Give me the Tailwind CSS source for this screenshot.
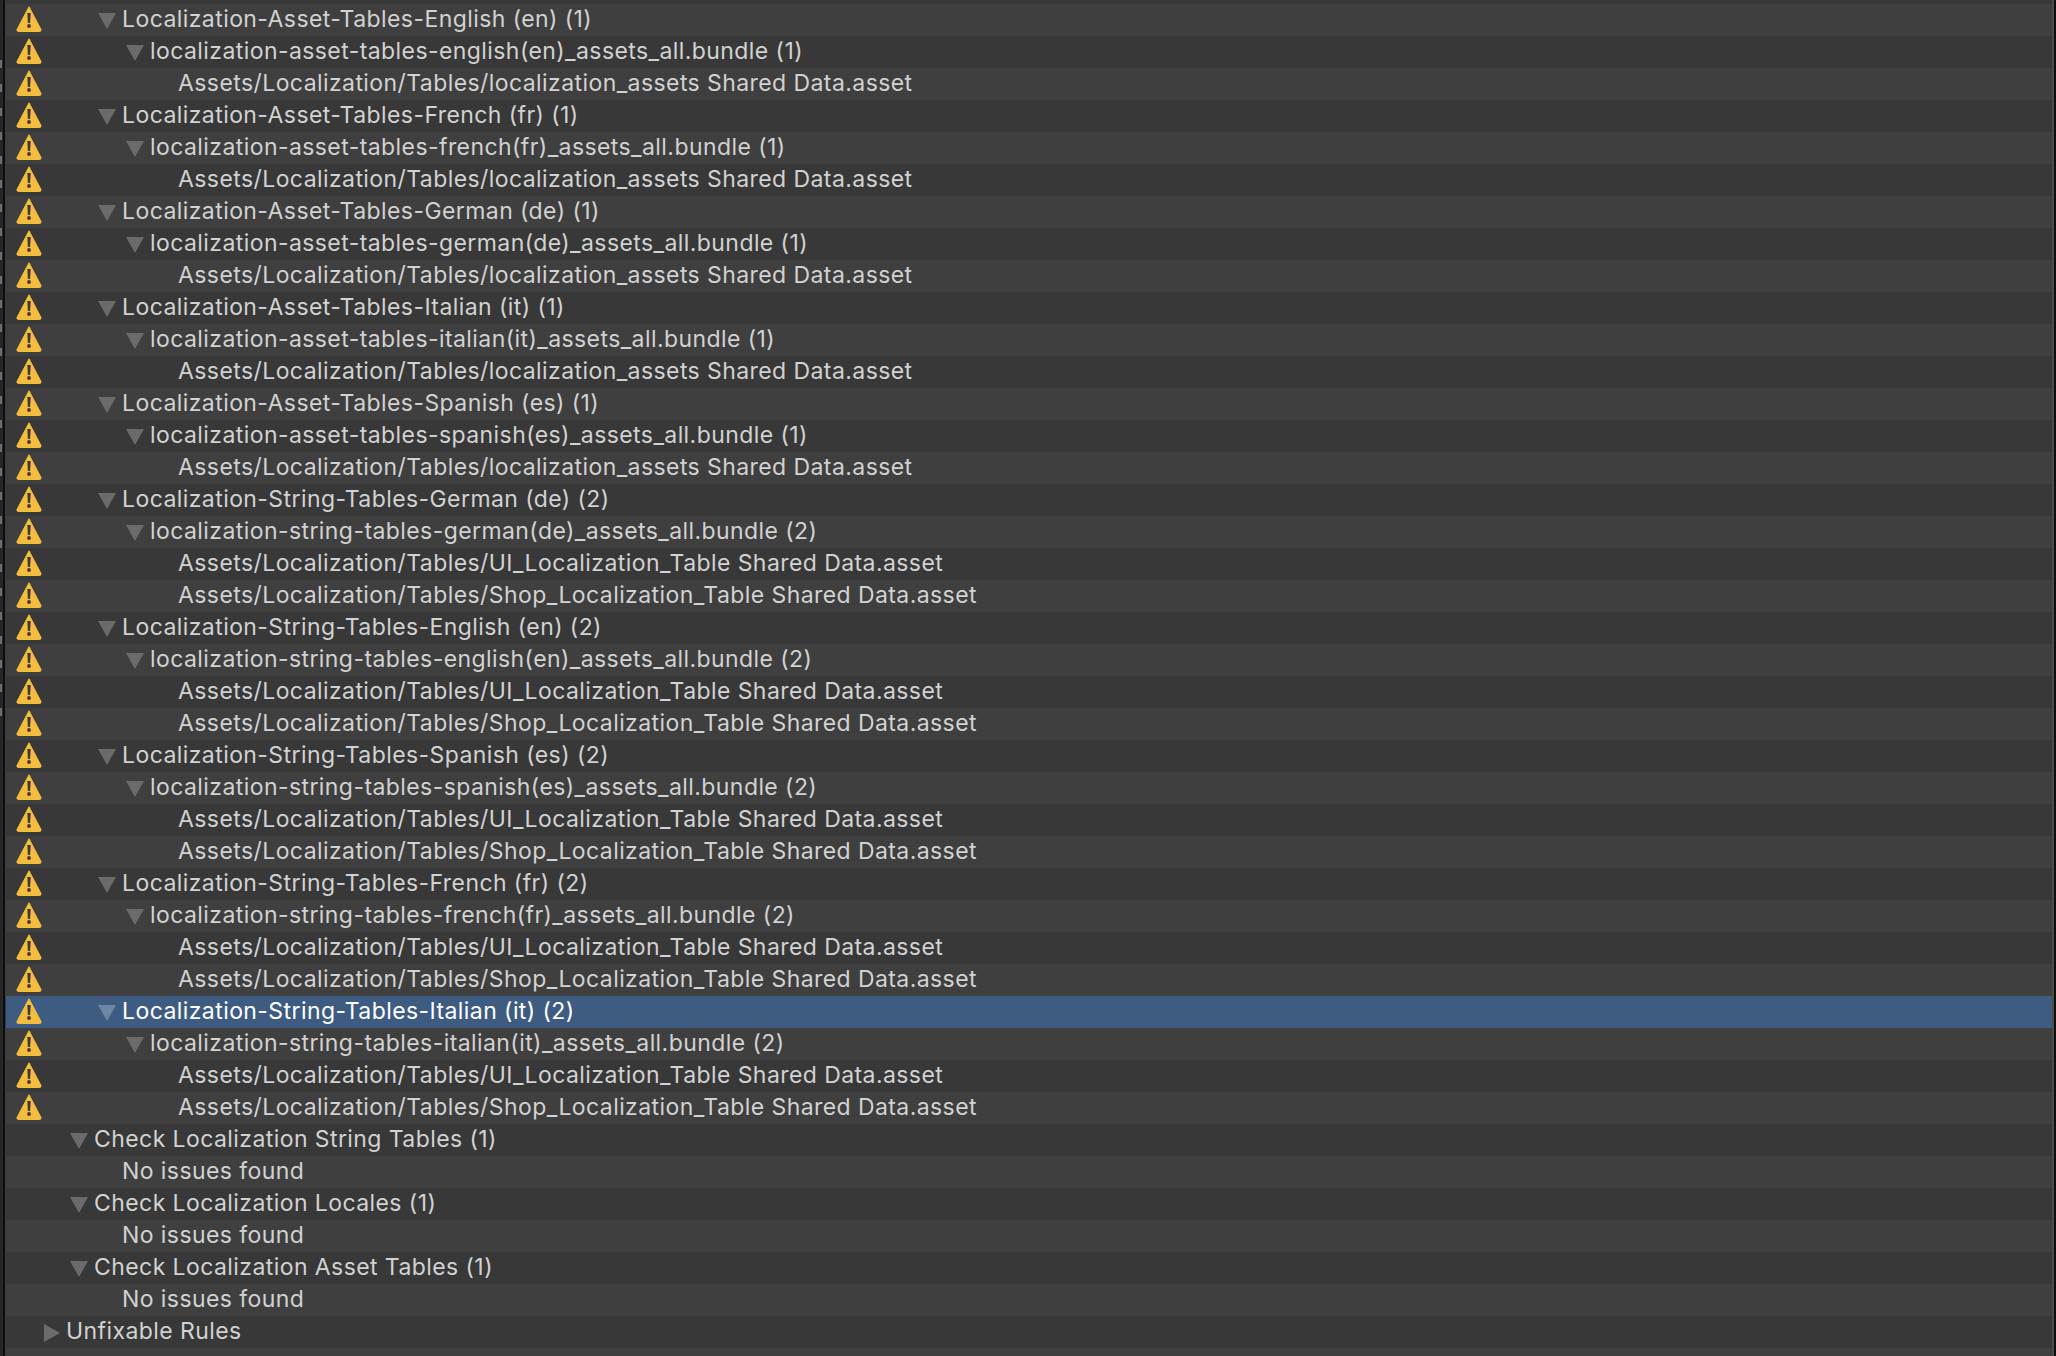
<!DOCTYPE html>
<html lang="en">
<head>
<meta charset="UTF-8">
<title>Analyze Rules</title>
<script src="https://cdn.jsdelivr.net/npm/@tailwindcss/browser@4"></script>
</head>
<body class="bg-[#232323] h-[1356px] w-[2056px] overflow-hidden font-['Inter',sans-serif]">
<div class="flex h-[1356px]">
  <!-- clipped neighbour panel, only slivers of its text show -->
  <div id="gutter" class="w-[3px] shrink-0 overflow-hidden bg-[#262626] pt-[60px] flex flex-col gap-[16px]"></div>
  <div class="w-[2px] shrink-0 bg-[#0e0e0e]"></div>
  <div class="w-px shrink-0 bg-[#3a3a3a]"></div>
  <div class="flex-1 flex flex-col overflow-hidden">
    <div class="h-1 shrink-0 bg-[#383838]"></div>
    <div id="tree" class="flex flex-col shrink-0"></div>
  </div>
  <div class="w-[2px] shrink-0 bg-[#4c4c4c]"></div>
  <div class="w-[2px] shrink-0 bg-[#0e0e0e]"></div>
</div>
<script>
  const warn = `<svg class="absolute left-[10px] top-[2px]" width="26" height="26" viewBox="0 0 26 26"><path d="M13 0.8 L25 23.5 Q25.5 25.5 23.5 25.5 L2.5 25.5 Q0.5 25.5 1 23.5 Z" fill="#f5bd40" stroke="#f5bd40" stroke-width="1" stroke-linejoin="round"/><path d="M11.3 7 h3.4 l-0.6 10 h-2.2 Z" fill="#3a3a3a"/><circle cx="13" cy="20" r="1.9" fill="#3a3a3a"/></svg>`;
  const down = `<svg class="mr-[6px] shrink-0 translate-y-px" width="18" height="16" viewBox="0 0 18 16"><path d="M0 0 H18 L9 16 Z" fill="currentColor"/></svg>`;
  const right = `<svg class="mr-[6px] ml-[1px] shrink-0 translate-y-px" width="16" height="18" viewBox="0 0 16 18"><path d="M0 0 L16 9 L0 18 Z" fill="currentColor"/></svg>`;

  const sharedPath = 'Assets/Localization/Tables/localization_assets Shared Data.asset';
  const uiPath = 'Assets/Localization/Tables/UI_Localization_Table Shared Data.asset';
  const shopPath = 'Assets/Localization/Tables/Shop_Localization_Table Shared Data.asset';
  const rows = [];

  function group(title, bundle, count, paths, selected) {
    rows.push({ text: `${title} (${count})`, left: 70, tri: down, warn: true, selected });
    rows.push({ text: `${bundle} (${count})`, left: 98, tri: down, warn: true });
    paths.forEach(p => rows.push({ text: p, left: 150, warn: true }));
  }

  group('Localization-Asset-Tables-English (en)', 'localization-asset-tables-english(en)_assets_all.bundle', 1, [sharedPath]);
  group('Localization-Asset-Tables-French (fr)', 'localization-asset-tables-french(fr)_assets_all.bundle', 1, [sharedPath]);
  group('Localization-Asset-Tables-German (de)', 'localization-asset-tables-german(de)_assets_all.bundle', 1, [sharedPath]);
  group('Localization-Asset-Tables-Italian (it)', 'localization-asset-tables-italian(it)_assets_all.bundle', 1, [sharedPath]);
  group('Localization-Asset-Tables-Spanish (es)', 'localization-asset-tables-spanish(es)_assets_all.bundle', 1, [sharedPath]);
  group('Localization-String-Tables-German (de)', 'localization-string-tables-german(de)_assets_all.bundle', 2, [uiPath, shopPath]);
  group('Localization-String-Tables-English (en)', 'localization-string-tables-english(en)_assets_all.bundle', 2, [uiPath, shopPath]);
  group('Localization-String-Tables-Spanish (es)', 'localization-string-tables-spanish(es)_assets_all.bundle', 2, [uiPath, shopPath]);
  group('Localization-String-Tables-French (fr)', 'localization-string-tables-french(fr)_assets_all.bundle', 2, [uiPath, shopPath]);
  group('Localization-String-Tables-Italian (it)', 'localization-string-tables-italian(it)_assets_all.bundle', 2, [uiPath, shopPath], true);

  ['Check Localization String Tables (1)', 'Check Localization Locales (1)', 'Check Localization Asset Tables (1)'].forEach(t => {
    rows.push({ text: t, left: 42, tri: down });
    rows.push({ text: 'No issues found', left: 94 });
  });
  rows.push({ text: 'Unfixable Rules', left: 15, tri: right });
  rows.push({ text: '', left: 0 });

  document.getElementById('tree').innerHTML = rows.map((r, i) => {
    let bg = i % 2 ? 'bg-[#383838]' : 'bg-[#3f3f3f]';
    let color = 'text-[#d2d2d2]';
    let triColor = 'text-[#6b6b6b]';
    if (r.selected) {
      bg = 'bg-[#3e5c82]';
      color = 'text-white';
      triColor = 'text-[#6f87a6]';
    }
    return `<div class="relative h-[32px] flex items-center shrink-0 whitespace-nowrap text-[23px] tracking-[0.42px] ${bg} ${color}">
      ${r.warn ? warn : ''}
      <div class="flex items-center" style="padding-left:${r.left + 22}px">
        ${r.tri ? `<span class="${triColor}">${r.tri}</span>` : ''}<span class="-translate-y-px">${r.text}</span>
      </div>
    </div>`;
  }).join('');

  document.getElementById('gutter').innerHTML = Array.from({ length: 28 }, () => '<div class="h-[8px] w-[2px] shrink-0 bg-[#6e6e6e]"></div>').join('');
</script>
</body>
</html>
